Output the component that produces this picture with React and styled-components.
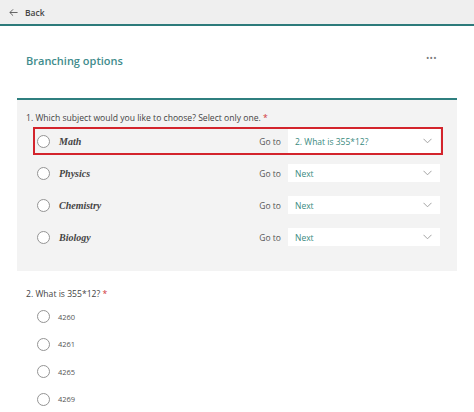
import React from "react";
import styled, { createGlobalStyle } from "styled-components";

const Global = createGlobalStyle`
  html, body { margin: 0; padding: 0; background: #ffffff; }
  body { font-family: "Open Sans", "Noto Sans", sans-serif; color: #333; width: 474px; height: 412px; overflow: hidden; }
`;

const Page = styled.div`
  width: 474px;
  display: flex;
  flex-direction: column;
`;

const TopBar = styled.div`
  height: 24px;
  background: #efefef;
  border-bottom: 2px solid #2d7b7b;
  display: flex;
  align-items: center;
  gap: 7px;
  padding-left: 9px;
  box-sizing: content-box;
`;

const BackLabel = styled.span`
  font-size: 8.5px;
  font-weight: 600;
  color: #444;
`;

const Header = styled.div`
  height: 72px;
  display: flex;
  align-items: center;
  justify-content: space-between;
  padding: 0 37px 4px 26px;
  box-sizing: border-box;
`;

const Title = styled.h1`
  margin: 0;
  font-size: 11px;
  font-weight: 600;
  color: #3f8c8c;
`;

const More = styled.span`
  font-size: 9px;
  color: #777;
  letter-spacing: 0.3px;
  line-height: 1;
  margin-top: -5px;
`;

const Panel = styled.div`
  margin: 0 17px;
  background: #f3f3f3;
  border-top: 2px solid #2f7f7f;
  padding: 11px 0 20px 9px;
  display: flex;
  flex-direction: column;
`;

const Question = styled.div`
  font-size: 8.6px;
  color: #444;
  height: 14px;
  line-height: 14px;
  margin-bottom: ${p => p.$gap}px;
`;

const Star = styled.span`
  color: #d13438;
`;

const Rows = styled.div`
  display: flex;
  flex-direction: column;
  gap: 4px;
  padding-left: 7px;
`;

const BranchRow = styled.div`
  width: 410px;
  height: 28px;
  box-sizing: border-box;
  border: 2px solid ${p => (p.$active ? "#d3242c" : "transparent")};
  display: flex;
  align-items: center;
  padding-left: 2px;
`;

const Radio = styled.span`
  width: 11px;
  height: 11px;
  border-radius: 50%;
  border: 1px solid #949494;
  background: #fff;
  flex: none;
`;

const SubjectLabel = styled.span`
  font-family: "Liberation Serif", "Times New Roman", serif;
  font-style: italic;
  font-weight: bold;
  font-size: 10px;
  color: #444;
  margin-left: 9px;
  flex: 1;
`;

const GoTo = styled.span`
  font-size: 8.5px;
  color: #555;
  margin-right: 7px;
`;

const Select = styled.div`
  width: 152px;
  height: ${p => (p.$active ? 24 : 18)}px;
  background: #fff;
  display: flex;
  align-items: center;
  justify-content: space-between;
  padding: 0 8px 0 7px;
  box-sizing: border-box;
  margin-right: 1px;
  font-size: 8.5px;
  color: #3a8a80;
`;

const Section = styled.div`
  padding: 16px 0 0 26px;
  display: flex;
  flex-direction: column;
`;

const Options = styled.div`
  display: flex;
  flex-direction: column;
  gap: 14.5px;
  padding-left: 11px;
`;

const Option = styled.div`
  display: flex;
  align-items: center;
  height: 13px;
  gap: 8px;
  font-size: 7.5px;
  color: #555;
`;

const Chevron = () => (
  <svg width="9" height="6" viewBox="0 0 9 6" fill="none">
    <path d="M0.5 0.8 L4.5 4.8 L8.5 0.8" stroke="#999" strokeWidth="0.9" />
  </svg>
);

const BackArrow = () => (
  <svg width="9" height="9" viewBox="0 0 10 10" fill="none">
    <path d="M9.5 5 H1 M4.5 1.5 L1 5 L4.5 8.5" stroke="#555" strokeWidth="1" />
  </svg>
);

const subjects = [
  { name: "Math", target: "2. What is 355*12?", active: true },
  { name: "Physics", target: "Next" },
  { name: "Chemistry", target: "Next" },
  { name: "Biology", target: "Next" },
];

const answers = ["4260", "4261", "4265", "4269"];

export default function App() {
  return (
    <Page>
      <Global />
      <TopBar>
        <BackArrow />
        <BackLabel>Back</BackLabel>
      </TopBar>
      <Header>
        <Title>Branching options</Title>
        <More>•••</More>
      </Header>
      <Panel>
        <Question $gap={2}>
          1. Which subject would you like to choose? Select only one. <Star>*</Star>
        </Question>
        <Rows>
          {subjects.map(s => (
            <BranchRow key={s.name} $active={s.active}>
              <Radio />
              <SubjectLabel>{s.name}</SubjectLabel>
              <GoTo>Go to</GoTo>
              <Select $active={s.active}>
                <span>{s.target}</span>
                <Chevron />
              </Select>
            </BranchRow>
          ))}
        </Rows>
      </Panel>
      <Section>
        <Question $gap={9}>
          2. What is 355*12? <Star>*</Star>
        </Question>
        <Options>
          {answers.map(a => (
            <Option key={a}>
              <Radio />
              <span>{a}</span>
            </Option>
          ))}
        </Options>
      </Section>
    </Page>
  );
}
